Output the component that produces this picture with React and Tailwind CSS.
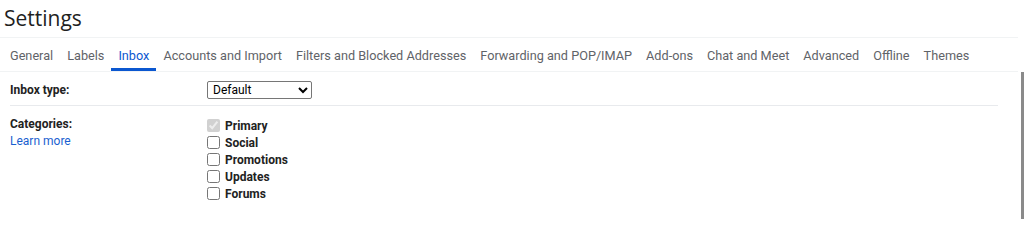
import React from 'react';

const tabs = [
  'General',
  'Labels',
  'Inbox',
  'Accounts and Import',
  'Filters and Blocked Addresses',
  'Forwarding and POP/IMAP',
  'Add-ons',
  'Chat and Meet',
  'Advanced',
  'Offline',
  'Themes',
];

const categories = [
  { name: 'Primary', locked: true },
  { name: 'Social' },
  { name: 'Promotions' },
  { name: 'Updates' },
  { name: 'Forums' },
];

export default function App() {
  return (
    <div className="w-[1024px] h-[219px] overflow-hidden bg-white text-[#202124]" style={{ fontFamily: 'Roboto, Arial, sans-serif' }}>
      <div className="w-[1018px]">
        <h1 className="h-[38px] pl-[4px] pt-[1px] flex items-center text-[21px] font-normal text-[#1f1f1f] border-b border-[#f1f3f4]" style={{ fontFamily: '"Open Sans", Roboto, sans-serif' }}>
          Settings
        </h1>
        <nav className="flex h-[34px] pl-[3px] border-b border-[#f1f3f4]">
          {tabs.map((tab) => (
            <div
              key={tab}
              className={
                tab === 'Inbox'
                  ? 'shrink-0 whitespace-nowrap px-[7px] flex items-center text-[12.7px] text-[#0b57d0] border-b-[3px] border-[#0b57d0] pt-[5px]'
                  : 'shrink-0 whitespace-nowrap px-[7px] pt-[2px] flex items-center text-[12.7px] text-[#5f6368]'
              }
            >
              {tab}
            </div>
          ))}
        </nav>
      </div>

      <div className="flex">
        <div className="w-[1020px] pl-[10px] pr-[22px]">
          <div className="flex items-center h-[34px] pt-[2px] border-b border-[#e8eaed] text-[12px] font-bold text-[#222]">
            <div className="w-[197px]">Inbox type:</div>
            <select className="w-[105px] h-[18px] border border-[#767676] rounded-[2px] text-[12px] font-normal text-black px-[1px] bg-white" defaultValue="Default">
              <option>Default</option>
              <option>Important first</option>
              <option>Unread first</option>
              <option>Starred first</option>
              <option>Priority Inbox</option>
              <option>Multiple Inboxes</option>
            </select>
          </div>

          <div className="flex pt-[10px] text-[12px]">
            <div className="w-[197px] leading-[17px]">
              <div className="font-bold text-[#222]">Categories:</div>
              <a href="#" className="text-[#1a5fd0]">Learn more</a>
            </div>
            <div className="flex flex-col pt-[1px]">
              {categories.map((c) => (
                <label key={c.name} className="flex items-center h-[17px] gap-[5px] font-bold text-[#222]">
                  <input
                    type="checkbox"
                    className="m-0 w-[13px] h-[13px]"
                    defaultChecked={c.locked}
                    disabled={c.locked}
                  />
                  {c.name}
                </label>
              ))}
            </div>
          </div>
        </div>
        <div className="w-[4px] h-[147px] flex justify-center">
          <div className="w-[3px] h-full bg-[#8a8a8a]" />
        </div>
      </div>
    </div>
  );
}
